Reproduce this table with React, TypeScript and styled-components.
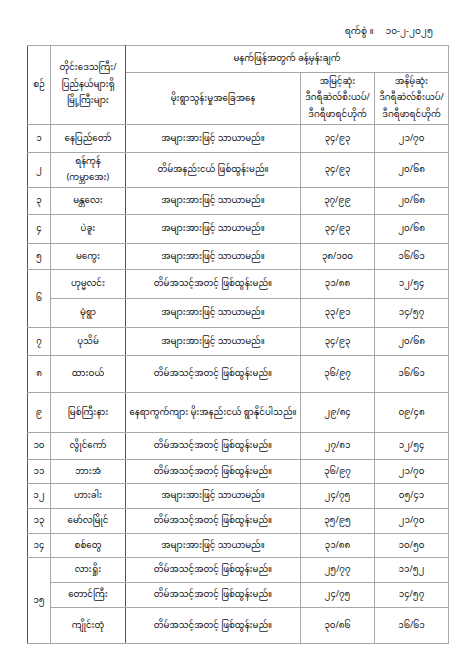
import React from "react"
import styled, { createGlobalStyle } from "styled-components"

const GlobalStyle = createGlobalStyle`
  html, body {
    margin: 0;
    padding: 0;
    background: #ffffff;
  }
  body {
    font-family: "Noto Sans Myanmar", "Padauk", "Myanmar Text", "Noto Sans", "DejaVu Sans", sans-serif;
    color: #111;
  }
`

const Page = styled.div`
  width: 474px;
  height: 668px;
  box-sizing: border-box;
  padding: 22px 26px 0 27px;
`

const DateLine = styled.div`
  display: flex;
  justify-content: flex-end;
  gap: 12px;
  padding-right: 15px;
  height: 23px;
  font-size: 9px;
  line-height: 20px;
  color: #222;
`

const Table = styled.table`
  border-collapse: collapse;
  table-layout: fixed;
  width: 421px;
  border: 1px solid #9a9a9a;
  border-left: 1px solid #555;
`

const Col = styled.col<{ $w: number }>`
  width: ${(p) => p.$w}px;
`

const Row = styled.tr<{ $h: number }>`
  height: ${(p) => p.$h}px;
`

const Line = styled.div`
  line-height: 16.5px;
`

const cellBase = `
  border: 1px solid #a8a8a8;
  padding: 0 2px;
  text-align: center;
  vertical-align: middle;
  font-size: 8.7px;
  white-space: nowrap;
  overflow: hidden;
`

const HeadCell = styled.th<{ $dark?: boolean; $darkRight?: boolean }>`
  ${cellBase}
  font-weight: normal;
  line-height: 16px;
  border-left-color: ${(p) => (p.$dark ? "#555" : "#a8a8a8")};
  border-right-color: ${(p) => (p.$darkRight ? "#555" : "#a8a8a8")};
`

const Cell = styled.td<{ $dark?: boolean; $darkRight?: boolean }>`
  ${cellBase}
  line-height: 16px;
  border-left-color: ${(p) => (p.$dark ? "#555" : "#a8a8a8")};
  border-right-color: ${(p) => (p.$darkRight ? "#555" : "#a8a8a8")};
`

type City = {
  name: React.ReactNode
  weather: string
  max: string
  min: string
  height: number
}

type Group = {
  no: string
  cities: City[]
}

const clear = "အများအားဖြင့် သာယာမည်။"
const partly = "တိမ်အသင့်အတင့် ဖြစ်ထွန်းမည်။"

const colWidths = [23, 75, 175, 74, 74]

const groups: Group[] = [
  { no: "၁", cities: [{ name: "နေပြည်တော်", weather: clear, max: "၃၄/၉၃", min: "၂၁/၇၀", height: 28 }] },
  {
    no: "၂",
    cities: [
      {
        name: (
          <>
            <Line>ရန်ကုန်</Line>
            <Line>(ကမ္ဘာအေး)</Line>
          </>
        ),
        weather: "တိမ်အနည်းငယ် ဖြစ်ထွန်းမည်။",
        max: "၃၄/၉၃",
        min: "၂၀/၆၈",
        height: 35,
      },
    ],
  },
  { no: "၃", cities: [{ name: "မန္တလေး", weather: clear, max: "၃၇/၉၉", min: "၂၀/၆၈", height: 27 }] },
  { no: "၄", cities: [{ name: "ပဲခူး", weather: clear, max: "၃၄/၉၃", min: "၂၀/၆၈", height: 29 }] },
  { no: "၅", cities: [{ name: "မကွေး", weather: clear, max: "၃၈/၁၀၀", min: "၁၆/၆၁", height: 26 }] },
  {
    no: "၆",
    cities: [
      { name: "ဟုမ္မလင်း", weather: partly, max: "၃၁/၈၈", min: "၁၂/၅၄", height: 29 },
      { name: "မုံရွာ", weather: clear, max: "၃၃/၉၁", min: "၁၄/၅၇", height: 29 },
    ],
  },
  { no: "၇", cities: [{ name: "ပုသိမ်", weather: clear, max: "၃၄/၉၃", min: "၂၀/၆၈", height: 28 }] },
  { no: "၈", cities: [{ name: "ထားဝယ်", weather: partly, max: "၃၆/၉၇", min: "၁၆/၆၁", height: 37 }] },
  {
    no: "၉",
    cities: [
      {
        name: "မြစ်ကြီးနား",
        weather: "နေရာကွက်ကျား မိုးအနည်းငယ် ရွာနိုင်ပါသည်။",
        max: "၂၉/၈၄",
        min: "၀၉/၄၈",
        height: 40,
      },
    ],
  },
  { no: "၁၀", cities: [{ name: "လွိုင်ကော်", weather: partly, max: "၂၇/၈၁", min: "၁၂/၅၄", height: 27 }] },
  { no: "၁၁", cities: [{ name: "ဘားအံ", weather: partly, max: "၃၆/၉၇", min: "၂၁/၇၀", height: 24 }] },
  { no: "၁၂", cities: [{ name: "ဟားခါး", weather: clear, max: "၂၄/၇၅", min: "၀၅/၄၁", height: 25 }] },
  { no: "၁၃", cities: [{ name: "မော်လမြိုင်", weather: partly, max: "၃၅/၉၅", min: "၂၁/၇၀", height: 25 }] },
  { no: "၁၄", cities: [{ name: "စစ်တွေ", weather: clear, max: "၃၁/၈၈", min: "၁၀/၅၀", height: 24 }] },
  {
    no: "၁၅",
    cities: [
      { name: "လားရှိုး", weather: partly, max: "၂၅/၇၇", min: "၁၁/၅၂", height: 25 },
      { name: "တောင်ကြီး", weather: partly, max: "၂၄/၇၅", min: "၁၄/၅၇", height: 25 },
      { name: "ကျိုင်းတုံ", weather: partly, max: "၃၀/၈၆", min: "၁၆/၆၁", height: 36 },
    ],
  },
]

const App = () => {
  return (
    <>
      <GlobalStyle />
      <Page>
        <DateLine>
          <span>ရက်စွဲ ။</span>
          <span>၁၀-၂-၂၀၂၅</span>
        </DateLine>
        <Table>
          <colgroup>
            {colWidths.map((w, i) => (
              <Col key={i} $w={w} />
            ))}
          </colgroup>
          <thead>
            <Row $h={27}>
              <HeadCell rowSpan={2} $dark>
                စဉ်
              </HeadCell>
              <HeadCell rowSpan={2} $darkRight>
                <Line>တိုင်းဒေသကြီး/</Line>
                <Line>ပြည်နယ်များရှိ</Line>
                <Line>မြို့ကြီးများ</Line>
              </HeadCell>
              <HeadCell colSpan={3}>မနက်ဖြန်အတွက် ခန့်မှန်းချက်</HeadCell>
            </Row>
            <Row $h={52}>
              <HeadCell>မိုးရွာသွန်းမှုအခြေအနေ</HeadCell>
              <HeadCell>
                <Line>အမြင့်ဆုံး</Line>
                <Line>ဒီဂရီဆဲလ်စီးယပ်/</Line>
                <Line>ဒီဂရီဖာရင်ဟိုက်</Line>
              </HeadCell>
              <HeadCell>
                <Line>အနိမ့်ဆုံး</Line>
                <Line>ဒီဂရီဆဲလ်စီးယပ်/</Line>
                <Line>ဒီဂရီဖာရင်ဟိုက်</Line>
              </HeadCell>
            </Row>
          </thead>
          <tbody>
            {groups.map((g) =>
              g.cities.map((c, i) => (
                <Row key={`${g.no}-${i}`} $h={c.height}>
                  {i === 0 && (
                    <Cell rowSpan={g.cities.length} $dark>
                      {g.no}
                    </Cell>
                  )}
                  <Cell $darkRight>{c.name}</Cell>
                  <Cell>{c.weather}</Cell>
                  <Cell>{c.max}</Cell>
                  <Cell>{c.min}</Cell>
                </Row>
              ))
            )}
          </tbody>
        </Table>
      </Page>
    </>
  )
}

export default App
